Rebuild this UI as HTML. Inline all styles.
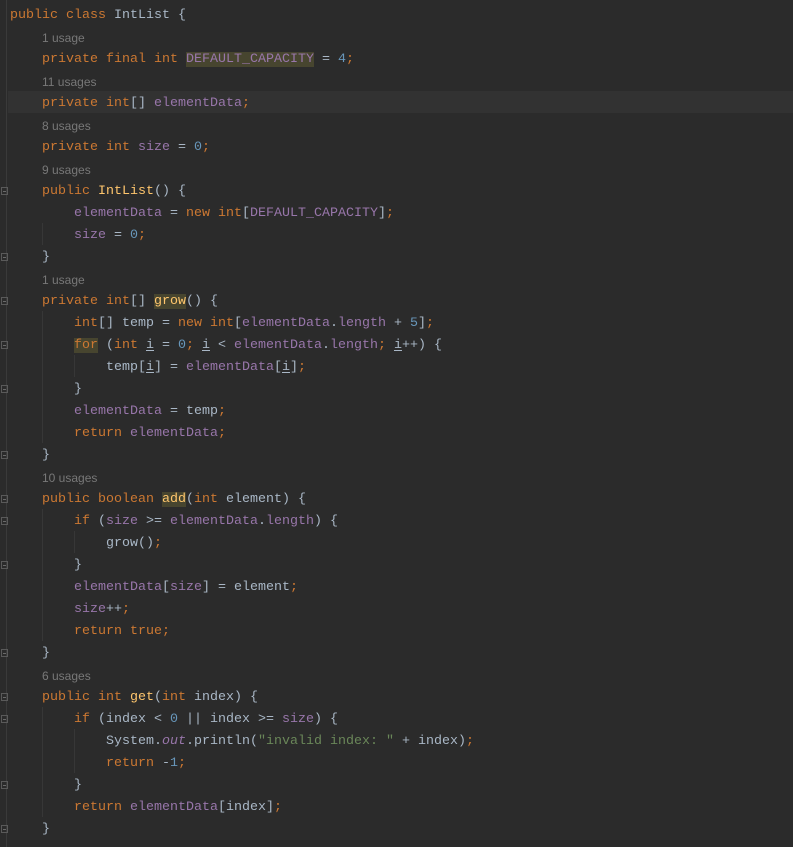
<!DOCTYPE html>
<html><head><meta charset="utf-8"><style>
html,body{margin:0;padding:0;background:#2b2b2b;width:793px;height:847px;overflow:hidden}
.w{position:absolute;left:0;top:2px;width:793px;height:845px}
.r{position:absolute;left:0;height:22px;line-height:22px;white-space:pre;font-family:"Liberation Mono",monospace;font-size:13.33px;color:#a9b7c6}
.h{font-family:"Liberation Sans",sans-serif;font-size:12px;color:#787878}
.k{color:#cc7832}.f{color:#9876aa}.n{color:#6897bb}.m{color:#ffc66d}.s{color:#6a8759}.i{font-style:italic}
.hl{background:#47452f}.u{text-decoration:underline;text-underline-offset:2px}
.cur{position:absolute;left:8px;right:0;top:91px;height:22px;background:#323232}
.g{position:absolute;left:6px;top:0;width:1px;height:847px;background:#3a3a3a}
.ig{position:absolute;width:1px;background:#373737}
.fm{position:absolute;left:1px;width:7px;height:8px;border:1px solid #5a5a5a;box-sizing:border-box}
.fm:after{content:"";position:absolute;left:1px;top:3px;width:3px;height:1px;background:#6a6a6a}
</style></head><body>
<div class="cur"></div>
<div class="g"></div>
<div class="ig" style="left:42px;top:223px;height:22px"></div>
<div class="ig" style="left:42px;top:311px;height:132px"></div>
<div class="ig" style="left:74px;top:355px;height:22px"></div>
<div class="ig" style="left:42px;top:509px;height:132px"></div>
<div class="ig" style="left:74px;top:531px;height:22px"></div>
<div class="ig" style="left:42px;top:707px;height:110px"></div>
<div class="ig" style="left:74px;top:729px;height:44px"></div>
<div class="w">
<div class="fm" style="top:185px"></div><div class="fm" style="top:251px"></div>
<div class="fm" style="top:295px"></div><div class="fm" style="top:339px"></div>
<div class="fm" style="top:383px"></div><div class="fm" style="top:449px"></div>
<div class="fm" style="top:493px"></div><div class="fm" style="top:515px"></div>
<div class="fm" style="top:559px"></div><div class="fm" style="top:647px"></div>
<div class="fm" style="top:691px"></div><div class="fm" style="top:713px"></div>
<div class="fm" style="top:779px"></div><div class="fm" style="top:823px"></div>

<div class="r" style="top:3px;left:10px"><span class="k">public class </span>IntList {</div>
<div class="r h" style="top:25px;left:42px">1 usage</div>
<div class="r" style="top:47px;left:42px"><span class="k">private final int </span><span class="f hl">DEFAULT_CAPACITY</span> = <span class="n">4</span><span class="k">;</span></div>
<div class="r h" style="top:69px;left:42px">11 usages</div>
<div class="r" style="top:91px;left:42px"><span class="k">private int</span>[] <span class="f">elementData</span><span class="k">;</span></div>
<div class="r h" style="top:113px;left:42px">8 usages</div>
<div class="r" style="top:135px;left:42px"><span class="k">private int </span><span class="f">size</span> = <span class="n">0</span><span class="k">;</span></div>
<div class="r h" style="top:157px;left:42px">9 usages</div>
<div class="r" style="top:179px;left:42px"><span class="k">public </span><span class="m">IntList</span>() {</div>
<div class="r" style="top:201px;left:74px"><span class="f">elementData</span> = <span class="k">new int</span>[<span class="f">DEFAULT_CAPACITY</span>]<span class="k">;</span></div>
<div class="r" style="top:223px;left:74px"><span class="f">size</span> = <span class="n">0</span><span class="k">;</span></div>
<div class="r" style="top:245px;left:42px">}</div>
<div class="r h" style="top:267px;left:42px">1 usage</div>
<div class="r" style="top:289px;left:42px"><span class="k">private int</span>[] <span class="m hl">grow</span>() {</div>
<div class="r" style="top:311px;left:74px"><span class="k">int</span>[] temp = <span class="k">new int</span>[<span class="f">elementData</span>.<span class="f">length</span> + <span class="n">5</span>]<span class="k">;</span></div>
<div class="r" style="top:333px;left:74px"><span class="k hl">for</span> (<span class="k">int </span><span class="u">i</span> = <span class="n">0</span><span class="k">; </span><span class="u">i</span> &lt; <span class="f">elementData</span>.<span class="f">length</span><span class="k">; </span><span class="u">i</span>++) {</div>
<div class="r" style="top:355px;left:106px">temp[<span class="u">i</span>] = <span class="f">elementData</span>[<span class="u">i</span>]<span class="k">;</span></div>
<div class="r" style="top:377px;left:74px">}</div>
<div class="r" style="top:399px;left:74px"><span class="f">elementData</span> = temp<span class="k">;</span></div>
<div class="r" style="top:421px;left:74px"><span class="k">return </span><span class="f">elementData</span><span class="k">;</span></div>
<div class="r" style="top:443px;left:42px">}</div>
<div class="r h" style="top:465px;left:42px">10 usages</div>
<div class="r" style="top:487px;left:42px"><span class="k">public boolean </span><span class="m hl">add</span>(<span class="k">int </span>element) {</div>
<div class="r" style="top:509px;left:74px"><span class="k">if </span>(<span class="f">size</span> &gt;= <span class="f">elementData</span>.<span class="f">length</span>) {</div>
<div class="r" style="top:531px;left:106px">grow()<span class="k">;</span></div>
<div class="r" style="top:553px;left:74px">}</div>
<div class="r" style="top:575px;left:74px"><span class="f">elementData</span>[<span class="f">size</span>] = element<span class="k">;</span></div>
<div class="r" style="top:597px;left:74px"><span class="f">size</span>++<span class="k">;</span></div>
<div class="r" style="top:619px;left:74px"><span class="k">return true;</span></div>
<div class="r" style="top:641px;left:42px">}</div>
<div class="r h" style="top:663px;left:42px">6 usages</div>
<div class="r" style="top:685px;left:42px"><span class="k">public int </span><span class="m">get</span>(<span class="k">int </span>index) {</div>
<div class="r" style="top:707px;left:74px"><span class="k">if </span>(index &lt; <span class="n">0</span> || index &gt;= <span class="f">size</span>) {</div>
<div class="r" style="top:729px;left:106px">System.<span class="f i">out</span>.println(<span class="s">"invalid index: "</span> + index)<span class="k">;</span></div>
<div class="r" style="top:751px;left:106px"><span class="k">return </span>-<span class="n">1</span><span class="k">;</span></div>
<div class="r" style="top:773px;left:74px">}</div>
<div class="r" style="top:795px;left:74px"><span class="k">return </span><span class="f">elementData</span>[index]<span class="k">;</span></div>
<div class="r" style="top:817px;left:42px">}</div>
</div>
</body></html>
